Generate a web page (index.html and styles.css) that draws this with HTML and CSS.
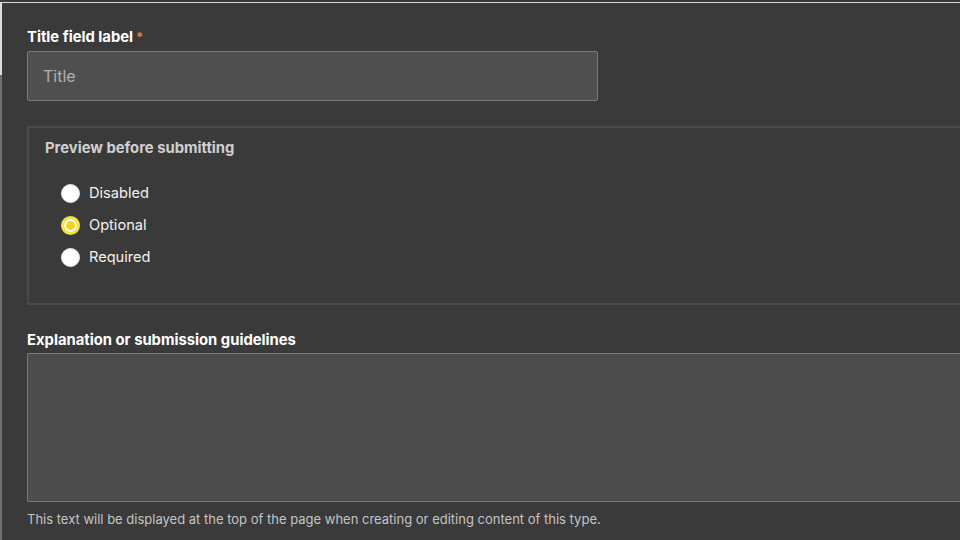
FILE: index.html
```html
<!DOCTYPE html>
<html lang="en">
<head>
<meta charset="utf-8">
<title>Content type form</title>
<link rel="stylesheet" href="styles.css">
</head>
<body>
<div class="frame">
  <div class="edge"><span class="edge-hi"></span></div>
  <form class="form">
    <div class="field">
      <label class="label" for="title">Title field label<span class="req">*</span></label>
      <input class="input" id="title" type="text" placeholder="Title">
    </div>
    <fieldset class="group">
      <legend class="legend">Preview before submitting</legend>
      <div class="options">
        <label class="option"><span class="radio"></span>Disabled</label>
        <label class="option"><span class="radio checked"></span>Optional</label>
        <label class="option"><span class="radio"></span>Required</label>
      </div>
    </fieldset>
    <div class="field field-help">
      <label class="label label-help" for="help">Explanation or submission guidelines</label>
      <div class="textarea" id="help"></div>
      <div class="desc">This text will be displayed at the top of the page when creating or editing content of this type.</div>
    </div>
  </form>
</div>
</body>
</html>
```

FILE: styles.css
```css
* { box-sizing: border-box; }
html, body {
  margin: 0;
  padding: 0;
  width: 960px;
  height: 540px;
  overflow: hidden;
  background: #3a3a3a;
  font-family: Inter, "Noto Sans", "Liberation Sans", sans-serif;
}
.frame {
  display: flex;
  height: 540px;
  margin-top: 2px;
  border-top: 1px solid #d8d8dc;
}
.edge {
  width: 2px;
  flex: none;
  background: #6f6f74;
  display: flex;
  flex-direction: column;
}
.edge-hi {
  height: 72px;
  background: #dcdce0;
}
.form {
  flex: 1;
  padding: 25px 0 0 25px;
  min-width: 0;
}
.field { display: flex; flex-direction: column; }
.label {
  color: #ffffff;
  font-weight: 700;
  font-size: 14.8px;
  line-height: 18px;
  margin-bottom: 5px;
}
.req {
  color: #e3822f;
  margin-left: 3px;
  font-size: 13px;
}
.input {
  width: 571px;
  height: 50px;
  background: #4f4f4f;
  border: 1px solid #7a7a7c;
  border-radius: 2px;
  padding: 0 15px;
  font: inherit;
  font-size: 16px;
  color: #fff;
  outline: none;
}
.input::placeholder { color: #b0b0b0; }
.group {
  margin: 25px 0 0 0;
  padding: 0 0 30px 16px;
  border: 2px solid #4a4a4a;
  border-right: none;
  height: 179px;
}
.legend {
  float: left;
  width: 100%;
  padding: 0;
  margin: 11px 0 0 0;
  color: #cfcfcf;
  font-weight: 700;
  font-size: 14.8px;
  line-height: 18px;
}
.options {
  clear: both;
  padding: 27px 0 0 16px;
  display: flex;
  flex-direction: column;
  gap: 13px;
}
.option {
  display: flex;
  align-items: center;
  gap: 9px;
  color: #f2f2f2;
  font-size: 14.6px;
  line-height: 19px;
}
.radio {
  width: 19px;
  height: 19px;
  border-radius: 50%;
  background: #ffffff;
  border: 1px solid #e6e6e6;
  flex: none;
}
.radio.checked {
  background: #f5d21f;
  border: 3px solid #f5e24a;
  box-shadow: inset 0 0 0 2px #ffffff;
}
.field-help { margin-top: 26px; }
.label-help { margin-bottom: 4px; }
.textarea {
  height: 149px;
  background: #4c4c4c;
  border: 1px solid #7a7a7c;
  border-right: none;
  border-radius: 2px 0 0 2px;
}
.desc {
  margin-top: 8px;
  color: #c4c4c4;
  font-size: 13px;
  line-height: 18px;
}
```
